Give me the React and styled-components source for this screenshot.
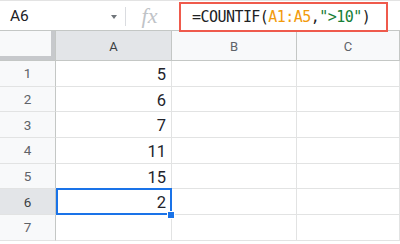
import styled, { createGlobalStyle } from "styled-components";

const GlobalStyle = createGlobalStyle`
  html, body {
    margin: 0;
    padding: 0;
    background: #fff;
    overflow: hidden;
  }
  body {
    font-family: Roboto, "Noto Sans", Arial, sans-serif;
  }
`;

const Sheet = styled.div`
  width: 400px;
  height: 244px;
  overflow: hidden;
  background: #fff;
`;

const TopBar = styled.div`
  display: flex;
  align-items: flex-start;
  height: 31px;
  box-sizing: border-box;
  border-top: 1px solid #e3e3e3;
  border-bottom: 1px solid #c4c7c5;
`;

const NameBox = styled.div`
  width: 125px;
  height: 29px;
  display: flex;
  align-items: center;
  padding: 0 8px 0 10px;
  box-sizing: border-box;
  font-size: 15.5px;
  color: #202124;
`;

const NameText = styled.span`
  flex: 1;
`;

const Caret = styled.span`
  width: 0;
  height: 0;
  border-left: 3px solid transparent;
  border-right: 3px solid transparent;
  border-top: 4px solid #70757a;
  margin-top: 2px;
`;

const Divider = styled.div`
  width: 1px;
  height: 19px;
  margin-top: 6px;
  background: #dadce0;
`;

const FxLabel = styled.div`
  width: 53px;
  height: 29px;
  display: flex;
  align-items: center;
  justify-content: center;
  font-family: "Liberation Serif", "DejaVu Serif", serif;
  font-style: italic;
  font-size: 22px;
  color: #c0c3c7;
  padding-right: 6px;
  box-sizing: border-box;
`;

const FormulaBox = styled.div`
  width: 209px;
  height: 30px;
  margin-top: 1px;
  margin-bottom: -1px;
  box-sizing: border-box;
  border: 2px solid #ef5a4c;
  display: flex;
  align-items: center;
  padding-left: 11px;
  font-family: "DejaVu Sans Mono", "Liberation Mono", monospace;
  font-size: 15px;
  letter-spacing: -0.55px;
  color: #202124;
  position: relative;
  z-index: 1;
  white-space: nowrap;
`;

const Token = styled.span`
  color: ${(p) => p.$color || "#202124"};
`;

const Grid = styled.div`
  display: grid;
  grid-template-columns: 56px 116px 125px 1fr;
  grid-template-rows: 30px;
  grid-auto-rows: 25.7px;
`;

const ColHeader = styled.div`
  box-sizing: border-box;
  border-right: 1px solid #c4c7c5;
  border-bottom: 1px solid #c4c7c5;
  background: ${(p) => (p.$active ? "#e3e5e8" : "#f8f9fa")};
  color: ${(p) => (p.$active ? "#3c4043" : "#5f6368")};
  font-size: 13px;
  display: flex;
  align-items: center;
  justify-content: center;
  padding-top: 2px;
`;

const Corner = styled.div`
  box-sizing: border-box;
  border-bottom: 1px solid #c4c7c5;
  border-right: 1px solid #c4c7c5;
  background: #f8f9fa;
  display: grid;
  grid-template-columns: 1fr 4px;
  grid-template-rows: 1fr 4px;
`;

const CornerBar = styled.div`
  background: #c7c9cc;
  grid-column: ${(p) => p.$col};
  grid-row: ${(p) => p.$row};
`;

const RowHeader = styled.div`
  box-sizing: border-box;
  border-right: 1px solid #c4c7c5;
  border-bottom: 1px solid #e2e3e3;
  background: ${(p) => (p.$active ? "#e3e5e8" : "#f8f9fa")};
  color: ${(p) => (p.$active ? "#3c4043" : "#5f6368")};
  font-size: 13.5px;
  display: flex;
  align-items: center;
  justify-content: center;
`;

const Cell = styled.div`
  box-sizing: border-box;
  border-right: 1px solid #e2e3e3;
  border-bottom: 1px solid #e2e3e3;
  display: flex;
  align-items: center;
  justify-content: flex-end;
  padding: 2px 5px 0 0;
  font-size: 16.5px;
  color: #22232b;
  position: ${(p) => (p.$selected ? "relative" : "static")};

  ${(p) =>
    p.$selected &&
    `
    &::after {
      content: "";
      position: absolute;
      top: -1px;
      left: 0;
      right: -1px;
      bottom: -1px;
      border: 2px solid #1a73e8;
    }
  `}
`;

const FillHandle = styled.span`
  position: absolute;
  right: -4px;
  bottom: -5px;
  width: 8px;
  height: 8px;
  box-sizing: border-box;
  background: #1a73e8;
  border: 1px solid #fff;
  z-index: 2;
`;

const values = [5, 6, 7, 11, 15, 2, ""];
const columns = ["A", "B", "C"];

export default function App() {
  return (
    <>
      <GlobalStyle />
      <Sheet>
        <TopBar>
          <NameBox>
            <NameText>A6</NameText>
            <Caret />
          </NameBox>
          <Divider />
          <FxLabel>fx</FxLabel>
          <FormulaBox>
            <Token>=COUNTIF(</Token>
            <Token $color="#f29b0c">A1:A5</Token>
            <Token>,</Token>
            <Token $color="#188038">"&gt;10"</Token>
            <Token>)</Token>
          </FormulaBox>
        </TopBar>
        <Grid>
          <Corner>
            <span />
            <CornerBar $col={2} $row={1} />
            <CornerBar $col={1} $row={2} />
            <CornerBar $col={2} $row={2} />
          </Corner>
          {columns.map((c) => (
            <ColHeader key={c} $active={c === "A"}>
              {c}
            </ColHeader>
          ))}
          {values.map((v, i) => {
            const selected = i === 5;
            return [
              <RowHeader key={`r${i}`} $active={selected}>
                {i + 1}
              </RowHeader>,
              <Cell key={`a${i}`} $selected={selected}>
                {v}
                {selected && <FillHandle />}
              </Cell>,
              <Cell key={`b${i}`} />,
              <Cell key={`c${i}`} />,
            ];
          })}
        </Grid>
      </Sheet>
    </>
  );
}
